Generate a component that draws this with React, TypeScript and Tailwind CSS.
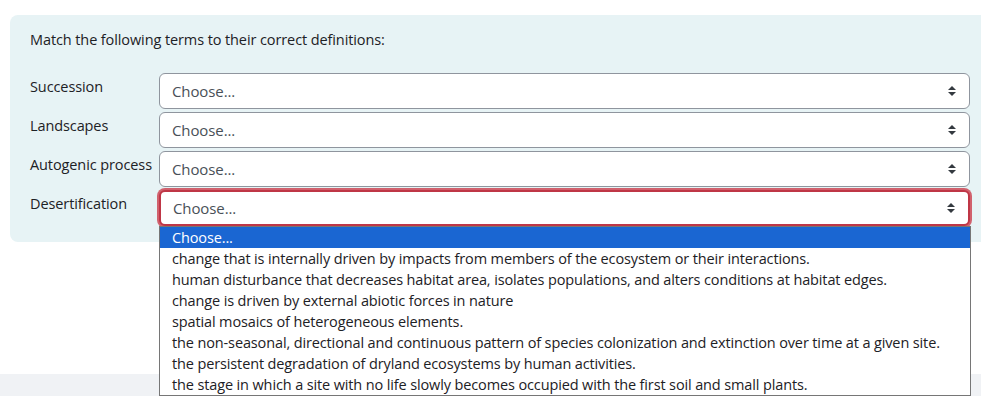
import React from 'react';

// 匹配题的条目
const terms = ['Succession', 'Landscapes', 'Autogenic process', 'Desertification'];

const options = [
  'change that is internally driven by impacts from members of the ecosystem or their interactions.',
  'human disturbance that decreases habitat area, isolates populations, and alters conditions at habitat edges.',
  'change is driven by external abiotic forces in nature',
  'spatial mosaics of heterogeneous elements.',
  'the non-seasonal, directional and continuous pattern of species colonization and extinction over time at a given site.',
  'the persistent degradation of dryland ecosystems by human activities.',
  'the stage in which a site with no life slowly becomes occupied with the first soil and small plants.',
];

const SortIcon = () => (
  <svg width="10" height="12" viewBox="0 0 10 12" className="text-[#343a40]">
    <path d="M5 1 L9 5 H1 Z" fill="currentColor" />
    <path d="M5 11 L9 7 H1 Z" fill="currentColor" />
  </svg>
);

const FakeSelect: React.FC<{ focused?: boolean }> = ({ focused }) => (
  <div
    className={`h-[36px] w-[811px] bg-white rounded-[6px] flex items-center justify-between pl-[12px] pr-[12px] text-[15px] text-[#495057] ${
      focused
        ? 'border-2 border-[#bf3646] shadow-[0_0_0_2px_rgba(205,70,85,0.85)]'
        : 'border border-[#8f959e]'
    }`}
  >
    <span className="tracking-[-0.1px]">Choose...</span>
    <SortIcon />
  </div>
);

export default function App() {
  return (
    <div
      className="relative w-[981px] h-[396px] overflow-hidden bg-white text-[#1d2125]"
      style={{ fontFamily: '"Open Sans", "Noto Sans", sans-serif' }}
    >
      <div className="pt-[15px] pl-[10px]">
        <div className="w-[1000px] h-[227px] bg-[#e7f3f5] rounded-[8px] pt-[14px] pl-[20px]">
          <p className="text-[14.5px] leading-[22px] tracking-[-0.1px]">
            Match the following terms to their correct definitions:
          </p>
          <div className="mt-[22px] flex flex-col gap-[3px]">
            {terms.map((t, i) => (
              <div key={t} className="flex">
                <div className="w-[129px] pt-[3px] text-[14.5px] leading-[22px] tracking-[-0.1px] whitespace-nowrap">
                  {t}
                </div>
                <FakeSelect focused={i === 3} />
              </div>
            ))}
          </div>
        </div>
      </div>

      <div className="mt-[132px] h-[24px] bg-[#f0f2f5]" />

      {/* 展开的下拉列表 */}
      <div className="absolute left-[159px] top-[226px] w-[812px] bg-white border border-[#767676] text-[14.5px] leading-[21px] tracking-[-0.13px] text-[#1d2125]">
        <div className="bg-[#1a66d2] text-white pl-[12px]">Choose...</div>
        {options.map((o) => (
          <div key={o} className="pl-[12px] whitespace-nowrap">
            {o}
          </div>
        ))}
      </div>
    </div>
  );
}
